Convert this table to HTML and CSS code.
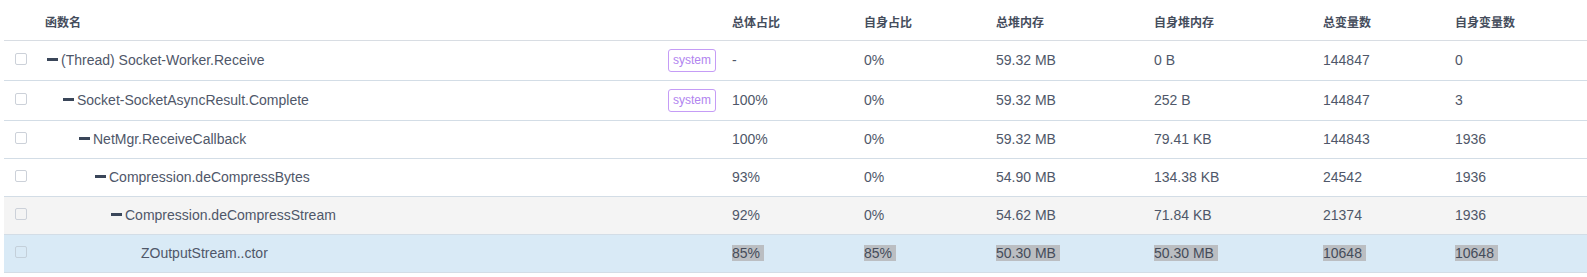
FILE: index.html
```html
<!DOCTYPE html>
<html lang="zh">
<head>
<meta charset="utf-8">
<title>函数列表</title>
<link rel="stylesheet" href="styles.css">
</head>
<body>
<div class="table">
  <div class="row head">
    <div class="cell chk"></div>
    <div class="cell name">函数名</div>
    <div class="cell">总体占比</div>
    <div class="cell">自身占比</div>
    <div class="cell">总堆内存</div>
    <div class="cell">自身堆内存</div>
    <div class="cell">总变量数</div>
    <div class="cell">自身变量数</div>
  </div>

  <div class="row">
    <div class="cell chk"><span class="box"></span></div>
    <div class="cell name">
      <span class="tree lv0"><i class="toggle"></i>(Thread) Socket-Worker.Receive</span>
      <span class="badge">system</span>
    </div>
    <div class="cell">-</div>
    <div class="cell">0%</div>
    <div class="cell">59.32 MB</div>
    <div class="cell">0 B</div>
    <div class="cell">144847</div>
    <div class="cell">0</div>
  </div>

  <div class="row">
    <div class="cell chk"><span class="box"></span></div>
    <div class="cell name">
      <span class="tree lv1"><i class="toggle"></i>Socket-SocketAsyncResult.Complete</span>
      <span class="badge">system</span>
    </div>
    <div class="cell">100%</div>
    <div class="cell">0%</div>
    <div class="cell">59.32 MB</div>
    <div class="cell">252 B</div>
    <div class="cell">144847</div>
    <div class="cell">3</div>
  </div>

  <div class="row">
    <div class="cell chk"><span class="box"></span></div>
    <div class="cell name">
      <span class="tree lv2"><i class="toggle"></i>NetMgr.ReceiveCallback</span>
    </div>
    <div class="cell">100%</div>
    <div class="cell">0%</div>
    <div class="cell">59.32 MB</div>
    <div class="cell">79.41 KB</div>
    <div class="cell">144843</div>
    <div class="cell">1936</div>
  </div>

  <div class="row">
    <div class="cell chk"><span class="box"></span></div>
    <div class="cell name">
      <span class="tree lv3"><i class="toggle"></i>Compression.deCompressBytes</span>
    </div>
    <div class="cell">93%</div>
    <div class="cell">0%</div>
    <div class="cell">54.90 MB</div>
    <div class="cell">134.38 KB</div>
    <div class="cell">24542</div>
    <div class="cell">1936</div>
  </div>

  <div class="row hover">
    <div class="cell chk"><span class="box"></span></div>
    <div class="cell name">
      <span class="tree lv4"><i class="toggle"></i>Compression.deCompressStream</span>
    </div>
    <div class="cell">92%</div>
    <div class="cell">0%</div>
    <div class="cell">54.62 MB</div>
    <div class="cell">71.84 KB</div>
    <div class="cell">21374</div>
    <div class="cell">1936</div>
  </div>

  <div class="row current">
    <div class="cell chk"><span class="box"></span></div>
    <div class="cell name">
      <span class="tree lv5"><i class="toggle leaf"></i>ZOutputStream..ctor</span>
    </div>
    <div class="cell"><span class="sel">85%</span></div>
    <div class="cell"><span class="sel">85%</span></div>
    <div class="cell"><span class="sel">50.30 MB</span></div>
    <div class="cell"><span class="sel">50.30 MB</span></div>
    <div class="cell"><span class="sel">10648</span></div>
    <div class="cell"><span class="sel">10648</span></div>
  </div>
</div>
</body>
</html>
```

FILE: styles.css
```css
* { box-sizing: border-box; }

body {
  margin: 0;
  background: #ffffff;
  font-family: "Liberation Sans", Arial, "Noto Sans CJK SC", sans-serif;
  color: #4f5769;
}

.table {
  margin-left: 4px;
}

.row {
  display: grid;
  grid-template-columns: 29px 699px 132px 132px 158px 169px 132px 1fr;
  align-items: center;
  padding: 8px 0;
  border-bottom: 1px solid #d3dde6;
  font-size: 14px;
  line-height: 21px;
}

.row.head {
  height: 41px;
  padding: 7px 0 0;
  border-bottom-color: #d8dde3;
  font-size: 12px;
  font-weight: bold;
  font-family: "Liberation Sans", "Noto Sans CJK SC", sans-serif;
  color: #454d5c;
}

.row.hover { background: #f4f4f4; }
.row.current { background: #d9eaf6; }

.cell {
  white-space: nowrap;
}

.chk {
  display: flex;
  padding-left: 11px;
}

.box {
  display: block;
  width: 12px;
  height: 12px;
  margin-bottom: 4px;
  border: 1px solid #ccd1d9;
  border-radius: 2px;
}

.row.current .box { border-color: #c4d0da; }

.name {
  display: flex;
  align-items: center;
  justify-content: space-between;
  padding-left: 12px;
  padding-right: 16px;
}

.tree {
  display: flex;
  align-items: center;
}

.lv1 { padding-left: 16px; }
.lv2 { padding-left: 32px; }
.lv3 { padding-left: 48px; }
.lv4 { padding-left: 64px; }
.lv5 { padding-left: 80px; }

.toggle {
  display: block;
  width: 11px;
  height: 3px;
  margin: 0 3px 2px 2px;
  background: #3a4659;
}

.toggle.leaf { background: transparent; }

.badge {
  display: block;
  height: 23px;
  padding: 0 4px;
  border: 1px solid #c59cf6;
  border-radius: 3px;
  font-size: 12px;
  line-height: 21px;
  color: #b184ef;
}

.sel {
  background: #bbbec2;
  padding-right: 4px;
  color: #454c5a;
}
```
